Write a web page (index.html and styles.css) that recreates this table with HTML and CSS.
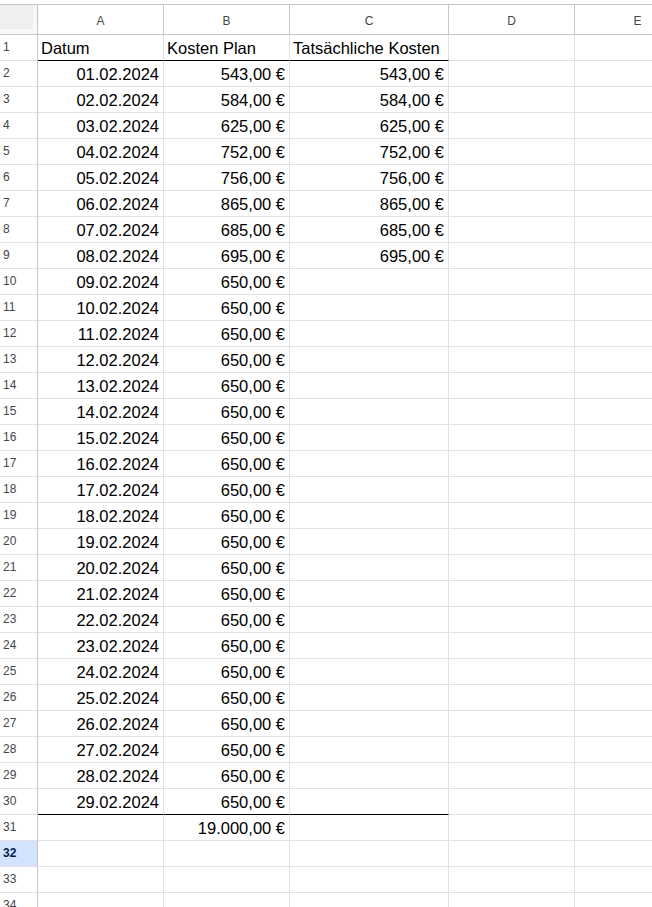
FILE: index.html
```html
<!DOCTYPE html>
<html lang="de">
<head>
<meta charset="utf-8">
<title>Kosten</title>
<link rel="stylesheet" href="styles.css">
</head>
<body>
<div class="viewport">
<div class="sheet">
  <div class="corner"><div class="corner-box"></div></div>
  <div class="colhead">A</div><div class="colhead">B</div><div class="colhead">C</div><div class="colhead">D</div><div class="colhead">E</div>

  <div class="rowhead">1</div><div class="cell txt line">Datum</div><div class="cell txt line">Kosten Plan</div><div class="cell txt line">Tatsächliche Kosten</div><div class="cell"></div><div class="cell"></div>
  <div class="rowhead">2</div><div class="cell num">01.02.2024</div><div class="cell num">543,00 €</div><div class="cell num">543,00 €</div><div class="cell"></div><div class="cell"></div>
  <div class="rowhead">3</div><div class="cell num">02.02.2024</div><div class="cell num">584,00 €</div><div class="cell num">584,00 €</div><div class="cell"></div><div class="cell"></div>
  <div class="rowhead">4</div><div class="cell num">03.02.2024</div><div class="cell num">625,00 €</div><div class="cell num">625,00 €</div><div class="cell"></div><div class="cell"></div>
  <div class="rowhead">5</div><div class="cell num">04.02.2024</div><div class="cell num">752,00 €</div><div class="cell num">752,00 €</div><div class="cell"></div><div class="cell"></div>
  <div class="rowhead">6</div><div class="cell num">05.02.2024</div><div class="cell num">756,00 €</div><div class="cell num">756,00 €</div><div class="cell"></div><div class="cell"></div>
  <div class="rowhead">7</div><div class="cell num">06.02.2024</div><div class="cell num">865,00 €</div><div class="cell num">865,00 €</div><div class="cell"></div><div class="cell"></div>
  <div class="rowhead">8</div><div class="cell num">07.02.2024</div><div class="cell num">685,00 €</div><div class="cell num">685,00 €</div><div class="cell"></div><div class="cell"></div>
  <div class="rowhead">9</div><div class="cell num">08.02.2024</div><div class="cell num">695,00 €</div><div class="cell num">695,00 €</div><div class="cell"></div><div class="cell"></div>
  <div class="rowhead">10</div><div class="cell num">09.02.2024</div><div class="cell num">650,00 €</div><div class="cell"></div><div class="cell"></div><div class="cell"></div>
  <div class="rowhead">11</div><div class="cell num">10.02.2024</div><div class="cell num">650,00 €</div><div class="cell"></div><div class="cell"></div><div class="cell"></div>
  <div class="rowhead">12</div><div class="cell num">11.02.2024</div><div class="cell num">650,00 €</div><div class="cell"></div><div class="cell"></div><div class="cell"></div>
  <div class="rowhead">13</div><div class="cell num">12.02.2024</div><div class="cell num">650,00 €</div><div class="cell"></div><div class="cell"></div><div class="cell"></div>
  <div class="rowhead">14</div><div class="cell num">13.02.2024</div><div class="cell num">650,00 €</div><div class="cell"></div><div class="cell"></div><div class="cell"></div>
  <div class="rowhead">15</div><div class="cell num">14.02.2024</div><div class="cell num">650,00 €</div><div class="cell"></div><div class="cell"></div><div class="cell"></div>
  <div class="rowhead">16</div><div class="cell num">15.02.2024</div><div class="cell num">650,00 €</div><div class="cell"></div><div class="cell"></div><div class="cell"></div>
  <div class="rowhead">17</div><div class="cell num">16.02.2024</div><div class="cell num">650,00 €</div><div class="cell"></div><div class="cell"></div><div class="cell"></div>
  <div class="rowhead">18</div><div class="cell num">17.02.2024</div><div class="cell num">650,00 €</div><div class="cell"></div><div class="cell"></div><div class="cell"></div>
  <div class="rowhead">19</div><div class="cell num">18.02.2024</div><div class="cell num">650,00 €</div><div class="cell"></div><div class="cell"></div><div class="cell"></div>
  <div class="rowhead">20</div><div class="cell num">19.02.2024</div><div class="cell num">650,00 €</div><div class="cell"></div><div class="cell"></div><div class="cell"></div>
  <div class="rowhead">21</div><div class="cell num">20.02.2024</div><div class="cell num">650,00 €</div><div class="cell"></div><div class="cell"></div><div class="cell"></div>
  <div class="rowhead">22</div><div class="cell num">21.02.2024</div><div class="cell num">650,00 €</div><div class="cell"></div><div class="cell"></div><div class="cell"></div>
  <div class="rowhead">23</div><div class="cell num">22.02.2024</div><div class="cell num">650,00 €</div><div class="cell"></div><div class="cell"></div><div class="cell"></div>
  <div class="rowhead">24</div><div class="cell num">23.02.2024</div><div class="cell num">650,00 €</div><div class="cell"></div><div class="cell"></div><div class="cell"></div>
  <div class="rowhead">25</div><div class="cell num">24.02.2024</div><div class="cell num">650,00 €</div><div class="cell"></div><div class="cell"></div><div class="cell"></div>
  <div class="rowhead">26</div><div class="cell num">25.02.2024</div><div class="cell num">650,00 €</div><div class="cell"></div><div class="cell"></div><div class="cell"></div>
  <div class="rowhead">27</div><div class="cell num">26.02.2024</div><div class="cell num">650,00 €</div><div class="cell"></div><div class="cell"></div><div class="cell"></div>
  <div class="rowhead">28</div><div class="cell num">27.02.2024</div><div class="cell num">650,00 €</div><div class="cell"></div><div class="cell"></div><div class="cell"></div>
  <div class="rowhead">29</div><div class="cell num">28.02.2024</div><div class="cell num">650,00 €</div><div class="cell"></div><div class="cell"></div><div class="cell"></div>
  <div class="rowhead">30</div><div class="cell num line">29.02.2024</div><div class="cell num line">650,00 €</div><div class="cell line"></div><div class="cell"></div><div class="cell"></div>
  <div class="rowhead">31</div><div class="cell"></div><div class="cell num">19.000,00 €</div><div class="cell"></div><div class="cell"></div><div class="cell"></div>
  <div class="rowhead active">32</div><div class="cell"></div><div class="cell"></div><div class="cell"></div><div class="cell"></div><div class="cell"></div>
  <div class="rowhead">33</div><div class="cell"></div><div class="cell"></div><div class="cell"></div><div class="cell"></div><div class="cell"></div>
  <div class="rowhead">34</div><div class="cell"></div><div class="cell"></div><div class="cell"></div><div class="cell"></div><div class="cell"></div>
</div>
</div>
</body>
</html>
```

FILE: styles.css
```css
html, body {
  margin: 0;
  padding: 0;
  background: #ffffff;
  overflow: hidden;
}

.viewport {
  width: 652px;
  height: 907px;
  overflow: hidden;
}

.sheet {
  display: grid;
  grid-template-columns: 38px 126px 126px 159px 126px 126px;
  grid-template-rows: 31px;
  grid-auto-rows: 26px;
  padding-top: 4px;
  font-family: "Liberation Sans", Arial, sans-serif;
  width: 701px;
}

.sheet > div {
  box-sizing: border-box;
  overflow: hidden;
  white-space: nowrap;
}

.corner {
  border-top: 1px solid #c4c7c5;
  border-bottom: 1px solid #c4c7c5;
  border-right: 1px solid #c4c7c5;
  background: #f8f9fa;
}

.corner-box {
  width: 33px;
  height: 24px;
  background: #eeeff0;
}

.colhead {
  border-top: 1px solid #c4c7c5;
  border-bottom: 1px solid #c4c7c5;
  border-right: 1px solid #c4c7c5;
  font-size: 12px;
  line-height: 24px;
  padding-top: 4px;
  text-align: center;
  color: #444746;
}

.rowhead {
  border-right: 1px solid #c4c7c5;
  border-bottom: 1px solid #e1e1e1;
  font-size: 12px;
  line-height: 25px;
  padding-left: 3px;
  color: #444746;
}

.rowhead.active {
  background: #d3e3fd;
  color: #041e49;
  font-weight: bold;
}

.cell {
  border-right: 1px solid #e1e1e1;
  border-bottom: 1px solid #e1e1e1;
  font-size: 16.5px;
  line-height: 18px;
  padding-top: 4px;
  color: #000000;
}

.txt {
  text-align: left;
  padding-left: 3px;
}

.num {
  text-align: right;
  padding-right: 4px;
}

.line {
  border-bottom-color: #000000;
}
```
